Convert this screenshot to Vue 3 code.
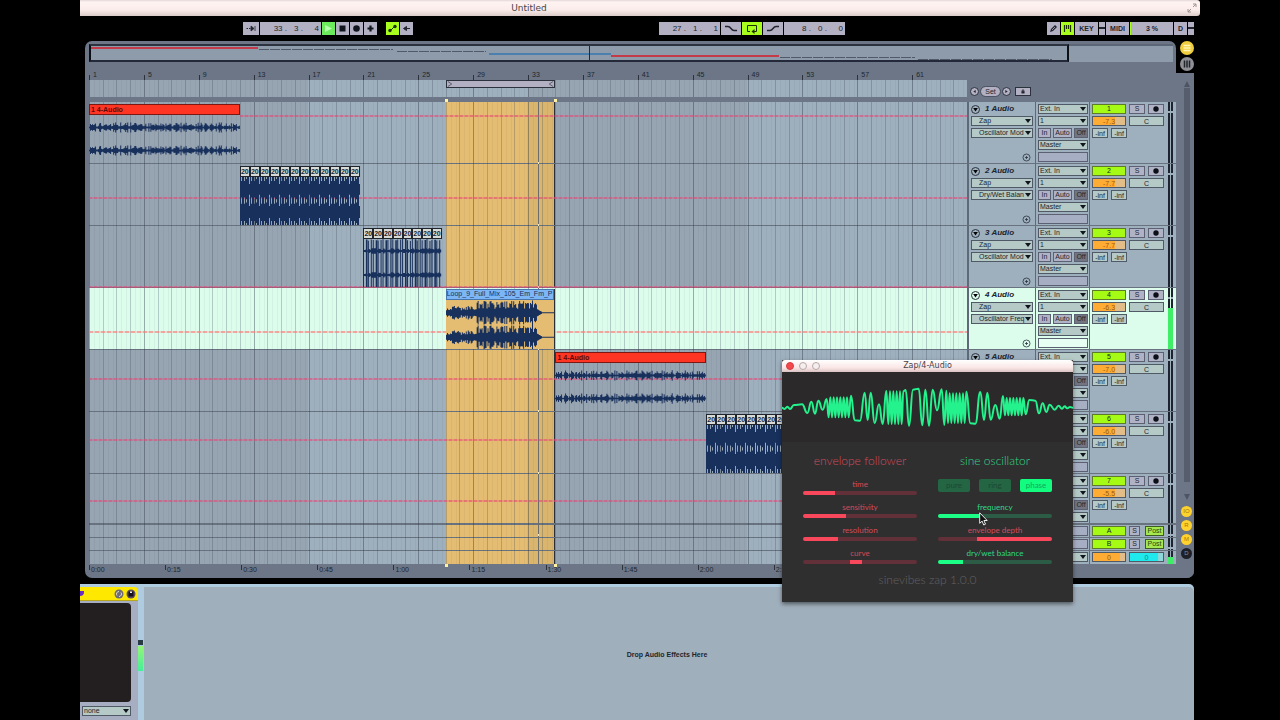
<script setup>
const BARS = 64
const at = bar => ((bar - 1) / BARS) * 100 + '%'
const span = (from, to) => ({ left: at(from), width: ((to - from) / BARS) * 100 + '%' })

function noise(seed) {
  let s = seed
  return () => {
    s = (s * 16807) % 2147483647
    return s / 2147483647
  }
}

const bar = (x, top, bottom, w = 1) =>
  `M${x} ${top.toFixed(1)}h${w}V${bottom.toFixed(1)}h-${w}z`

function sparseWave(seed) {
  const r = noise(seed)
  let d = ''
  for (let x = 0; x < 150; x++) {
    const hit = x % 5 === 1 || x % 7 === 3
    const a = hit ? 3 + r() * 2.5 : 0.7 + r() * 2.4
    d += bar(x, 13 - a, 13 + a) + bar(x, 37 - a, 37 + a)
  }
  return d
}

function denseWave(slices) {
  let d = ''
  for (let x = 0; x < slices * 10; x++) {
    const k = x % 10
    const cut = k === 1 || k === 4 ? 4 : k === 9 ? 7 : k === 6 ? 2 : 0
    d += bar(x, cut, 24 - cut * 0.9) + bar(x, 24 + cut * 0.7, 48 - cut)
  }
  return d
}

function stripeWave(slices) {
  const r = noise(77)
  let d = ''
  for (let x = 0; x < slices * 10; x++) {
    const k = x % 10
    if (k === 0 || k === 3 || k === 5 || k === 8) d += bar(x, r() * 2, 48, k === 3 ? 1.6 : 1)
    else {
      const a = 0.8 + r() * 2
      d += bar(x, 12 - a, 12 + a) + bar(x, 36 - a, 36 + a)
    }
  }
  return d
}

function loopWave() {
  const r = noise(421)
  let d = ''
  for (let x = 0; x < 110; x++) {
    let a
    if (x < 31) a = 2.5 + r() * 4.5
    else if (x < 92) a = r() > 0.2 ? 8 + r() * 4.5 : 4 + r() * 2
    else if (x < 98) a = Math.max(0.5, (98 - x) * 0.6)
    else a = 0.4
    d += bar(x, Math.max(0, 13 - a), 13 + a) + bar(x, 38 - a, Math.min(50, 38 + a))
  }
  return d
}

const tracks = [
  { n: 1, param: 'Oscillator Mod', vol: '-7.3', auto: 13, autoFrom: 12, clip: { type: 'red', from: 1, to: 12, wave: sparseWave(9) } },
  { n: 2, param: 'Dry/Wet Balan', vol: '-7.7', auto: 33, clip: { type: 'cut', from: 12, to: 20.75, slices: 12, wave: denseWave(12) } },
  { n: 3, param: 'Oscillator Mod', vol: '-7.7', auto: 60, clip: { type: 'cut', from: 21, to: 26.7, slices: 8, wave: stripeWave(8) } },
  { n: 4, param: 'Oscillator Freq', vol: '-6.3', auto: 43, selected: true, level: 41, clip: { type: 'loop', from: 27, to: 35, wave: loopWave() } },
  { n: 5, param: 'Oscillator Mod', vol: '-7.0', auto: 28, clip: { type: 'red', from: 35, to: 46, wave: sparseWave(31) } },
  { n: 6, param: 'Dry/Wet Balan', vol: '-6.0', auto: 27, clip: { type: 'cut', from: 46, to: 54.75, slices: 12, wave: denseWave(12) } },
  { n: 7, param: 'Oscillator Mod', vol: '-5.5', auto: 26, short: true }
]

const barLabels = Array.from({ length: 16 }, (_, i) => 1 + i * 4)
const times = ['0:00', '0:15', '0:30', '0:45', '1:00', '1:15', '1:30', '1:45', '2:00', '2:15', '2:30', '2:45']

const overview = [
  { kind: 'red', x: 0, w: 15.4, y: 0 },
  { kind: 'cuts', x: 15.5, w: 12.4, y: 2 },
  { kind: 'cuts', x: 28.2, w: 8.2, y: 4 },
  { kind: 'blue', x: 36.7, w: 11.3, y: 6 },
  { kind: 'red', x: 48, w: 15.5, y: 8 },
  { kind: 'cuts', x: 63.6, w: 12.4, y: 10 },
  { kind: 'cuts', x: 76.3, w: 12.4, y: 12 }
]

const follower = [
  { name: 'time', from: 0, to: 28 },
  { name: 'sensitivity', from: 0, to: 38 },
  { name: 'resolution', from: 0, to: 31 },
  { name: 'curve', from: 41, to: 52 }
]
const oscillator = [
  { name: 'frequency', from: 0, to: 38, green: true },
  { name: 'envelope depth', from: 34, to: 100 },
  { name: 'dry/wet balance', from: 0, to: 22, green: true }
]

function dense(from, to, top, bottom) {
  const out = []
  let up = false
  for (let x = from; x <= to; x += 5) {
    out.push([x, up ? top : bottom])
    up = !up
  }
  return out
}
const extremes = [
  [20, 157], [28, 161], [36, 154], [44, 161], [56, 149], [80, 147], [96, 173], [108, 139], [119, 175], [129, 136],
  [142, 163], [154, 131], ...dense(160, 220, 126, 186), [227, 121], [238, 195], [254, 196], [268, 112], [277, 194],
  [286, 112], [298, 203], [311, 147], [322, 206], [333, 107], ...dense(339, 387, 108, 206), [391, 104], [401, 211],
  [413, 103], [430, 100], [441, 210], [450, 103], [461, 211], [472, 103], [485, 165], [499, 102], [507, 209],
  [513, 106], ...dense(518, 568, 114, 203), [573, 109], [585, 204], [600, 205], [615, 110], [626, 194], [636, 112],
  [646, 193], [660, 149], [673, 190], [683, 122], ...dense(689, 739, 128, 180), [744, 128], [751, 177], [762, 134],
  [780, 136], [791, 174], [802, 144], [813, 170], [823, 148], [838, 163], [850, 151], [860, 160], [868, 153],
  [876, 159], [884, 155], [893, 157]
]
const oscPath = extremes
  .map(([x, y], i) => {
    if (!i) return `M${x} ${y}`
    const [px, py] = extremes[i - 1]
    const m = (px + x) / 2
    return `C${m} ${py} ${m} ${y} ${x} ${y}`
  })
  .join('')
</script>

<template>
  <div class="screen">
    <header class="titlebar">
      <span class="title">Untitled</span>
      <button class="expand" aria-label="Full screen">
        <svg viewBox="0 0 10 10"><path d="M6 1h3v3M9 1 6 4M4 9H1V6M1 9l3-3" /></svg>
      </button>
    </header>

    <nav class="toolbar">
      <div class="group left">
        <button class="tb w16" aria-label="Follow"><svg viewBox="0 0 16 13"><path d="M3.500 6.500H9" stroke="#20242c" stroke-dasharray="1.500 1" /><path d="M8 4v5l3-2.500zM12 4v5" fill="#20242c" stroke="#20242c" stroke-width=".8" /></svg></button>
        <div class="pos"><input aria-label="Bar" value="33 ." /><input aria-label="Beat" value="3 ." /><input aria-label="Sixteenth" value="4" /></div>
        <button class="tb w13 play" aria-label="Play"><svg viewBox="0 0 13 13"><path d="M3 3v7l7-3.500z" fill="#b9ffb0" /></svg></button>
        <button class="tb w13" aria-label="Stop"><svg viewBox="0 0 13 13"><path d="M3.500 3.500h6v6h-6z" fill="#10141c" /></svg></button>
        <button class="tb w13" aria-label="Record"><svg viewBox="0 0 13 13"><circle cx="6.500" cy="6.500" r="3.300" fill="#10141c" /></svg></button>
        <button class="tb w13" aria-label="Overdub"><svg viewBox="0 0 13 13"><path d="M6.500 3.500v6M3.500 6.500h6" stroke="#10141c" stroke-width="2.200" /></svg></button>
        <button class="tb w13 lime gap" aria-label="Automation"><svg viewBox="0 0 13 13"><path d="M4 9 9 4" stroke="#1c3000" /><circle cx="4" cy="8.500" r="1.700" fill="#1c3000" /><circle cx="9" cy="4.500" r="1.700" fill="#1c3000" /></svg></button>
        <button class="tb w13" aria-label="Back to arrangement"><svg viewBox="0 0 13 13"><path d="M6.500 4.500v4l-3-2zM6 6.500h4" fill="#20242c" stroke="#20242c" /></svg></button>
      </div>
      <div class="group middle">
        <div class="pos"><input aria-label="Loop start bar" value="27 ." /><input aria-label="Loop start beat" value="1 ." /><input aria-label="Loop start sixteenth" value="1" /></div>
        <button class="tb w20" aria-label="Punch in"><svg viewBox="0 0 20 13"><path d="M4 4.500h3c3 0 3 4 6 4h3" stroke="#20242c" stroke-width="1.500" fill="none" /></svg></button>
        <button class="tb w20 lime" aria-label="Loop"><svg viewBox="0 0 20 13"><path d="M8 9.500H5.500v-6h9v6H12" stroke="#1c3000" fill="none" /><path d="M12.500 7v5L9.500 9.500z" fill="#1c3000" /></svg></button>
        <button class="tb w20" aria-label="Punch out"><svg viewBox="0 0 20 13"><path d="M4 8.500h3c3 0 3-4 6-4h3" stroke="#20242c" stroke-width="1.500" fill="none" /></svg></button>
        <div class="pos"><input aria-label="Loop bars" value="8 ." /><input aria-label="Loop beats" value="0 ." /><input aria-label="Loop sixteenths" value="0" /></div>
      </div>
      <div class="group right">
        <button class="tb w13" aria-label="Draw"><svg viewBox="0 0 13 13"><path d="m3 10 1-3 4-4 2 2-4 4z" fill="#20242c" /><path d="m5 8 3-3" stroke="#b4b0c3" stroke-width=".8" /></svg></button>
        <button class="tb w13 lime" aria-label="Keyboard"><svg viewBox="0 0 13 13"><path d="M3.500 3v7M9.500 3v7M5.500 3v4M7.500 3v4" stroke="#1c3000" stroke-width="1.200" /></svg></button>
        <button class="tb w22">KEY</button>
        <span class="io"></span>
        <button class="tb w22">MIDI</button>
        <span class="cpu">3 %</span>
        <button class="tb w13">D</button>
        <span class="io"></span>
      </div>
    </nav>

    <main class="arrangement">
      <section class="main">
        <div class="overview">
          <div v-for="(o, i) in overview" :key="i" :class="['ov', o.kind]" :style="{ left: o.x + '%', width: o.w + '%', top: o.y + 'px' }"></div>
          <div class="ov-frame"></div>
          <div class="ov-head"></div>
        </div>

        <div class="row">
          <div class="ruler">
            <span v-for="b in barLabels" :key="b" class="tick" :style="{ left: at(b) }">{{ b }}</span>
          </div>
          <div class="side"></div>
        </div>

        <div class="row scrubrow">
          <div class="scrub shade">
            <div class="grid"><i v-for="b in 64" :key="b"></i></div>
            <div class="brace" :style="span(27, 35)">
              <svg viewBox="0 0 6 7"><path d="M.5.5 5 3.500.5 6.500" /></svg>
              <svg viewBox="0 0 6 7"><path d="M5.500.5 1 3.500l4.500 3" /></svg>
            </div>
          </div>
          <div class="side setbar">
            <button class="dot" aria-label="Previous locator"><svg viewBox="0 0 9 9"><path d="M6 2.500v4l-3-2z" /></svg></button>
            <button class="set">Set</button>
            <button class="dot" aria-label="Next locator"><svg viewBox="0 0 9 9"><path d="M3 2.500v4l3-2z" /></svg></button>
            <button class="lock" aria-label="Lock envelopes"><svg viewBox="0 0 9 9"><path d="M2.500 4h4v3h-4z" /><path d="M3.500 4V2.500h2V4" fill="none" stroke="#20242c" /></svg></button>
          </div>
        </div>

        <div class="tracks">
          <div class="backdrop">
            <div class="shade fill"></div>
            <div class="selection" :style="span(27, 35)"></div>
          </div>
          <div class="overlay">
            <div class="grid"><i v-for="b in 64" :key="b"></i></div>
            <div class="playhead" :style="{ left: at(33.7) }"></div>
          </div>

          <div v-for="t in tracks" :key="t.n" :class="['row', 'track', { selected: t.selected, short: t.short }]">
            <div class="lane">
              <div class="automation" :style="{ top: t.auto + 'px', left: at(t.autoFrom || 1) }"></div>
              <div v-if="t.clip" :class="['clip', t.clip.type]" :style="span(t.clip.from, t.clip.to)">
                <div v-if="t.clip.type === 'cut'" class="slices"><b v-for="s in t.clip.slices" :key="s">20</b></div>
                <div v-else class="cliphead">{{ t.clip.type === 'red' ? '1 4-Audio' : 'Loop_9_Full_Mix_105_Em_Fm_P' }}</div>
                <svg class="wave" :viewBox="t.clip.type === 'cut' ? `0 0 ${t.clip.slices * 10} 48` : t.clip.type === 'red' ? '0 0 150 50' : '0 0 110 50'" preserveAspectRatio="none"><path :d="t.clip.wave" /></svg>
              </div>
            </div>
            <div class="side panel">
              <div class="col names">
                <div class="name"><button class="fold" aria-label="Fold track"><svg viewBox="0 0 9 9"><path d="M1.500 2.500h6l-3 4.500z" /></svg></button><strong v-if="!t.short">{{ t.n }} Audio</strong></div>
                <label class="sel wide"><select aria-label="Device"><option>Zap</option></select></label>
                <label class="sel wide"><select aria-label="Parameter"><option>{{ t.param }}</option></select></label>
                <button v-if="!t.short" class="add" aria-label="Add lane"><svg viewBox="0 0 9 9"><circle cx="4.500" cy="4.500" r="3.500" /><path d="M3 4.500h3M4.500 3v3" /></svg></button>
              </div>
              <div class="col routing">
                <label class="sel"><select aria-label="Input"><option>Ext. In</option></select></label>
                <label class="sel"><select aria-label="Channel"><option>1</option></select></label>
                <div class="mon"><button class="b12">In</button><button class="b19">Auto</button><button class="b13 off">Off</button></div>
                <label class="sel"><select aria-label="Output"><option>Master</option></select></label>
                <div v-if="!t.short" class="blank"></div>
              </div>
              <div class="col mixer">
                <div class="pair"><button class="num">{{ t.n }}</button><button class="sq">S</button><button class="sq" aria-label="Arm"><svg viewBox="0 0 9 8"><circle cx="4.500" cy="4" r="2.700" /></svg></button></div>
                <div class="pair"><input class="vol" aria-label="Volume" :value="t.vol" /><input class="pan" aria-label="Pan" value="C" /></div>
                <div class="pair sends"><input aria-label="Send A" value="-inf" /><input aria-label="Send B" value="-inf" /></div>
              </div>
              <div class="meter"><i></i><i></i><em v-if="t.level" :style="{ height: t.level + 'px' }"></em></div>
            </div>
          </div>

          <div v-for="r in ['A', 'B']" :key="r" class="row return">
            <div class="lane"></div>
            <div class="side panel">
              <div class="col names"></div>
              <div class="col routing"><div class="blank"></div></div>
              <div class="col mixer"><div class="pair"><button class="num">{{ r }}</button><button class="sq thin">S</button><button class="post">Post</button></div></div>
              <div class="meter"><i></i><i></i></div>
            </div>
          </div>
          <div class="row return master">
            <div class="lane"></div>
            <div class="side panel">
              <div class="col names"></div>
              <div class="col routing"><label class="sel"><select aria-label="Master output"><option>1/2</option></select></label></div>
              <div class="col mixer"><div class="pair"><input class="vol full" aria-label="Master volume" value="0" /><input class="cue" aria-label="Cue volume" value="0" /></div></div>
              <div class="meter"><i></i><i></i><em :style="{ height: '7px' }"></em></div>
            </div>
          </div>
          <div class="markers">
            <template v-for="b in [27, 35]" :key="b">
              <i class="mark top" :style="{ left: at(b) }"></i>
              <i class="mark bottom" :style="{ left: at(b) }"></i>
            </template>
          </div>
        </div>

        <div class="row">
          <div class="timeline">
            <span v-for="(t, i) in times" :key="t" class="tick" :style="{ left: i * 8.667 + '%' }">{{ t }}</span>
          </div>
          <div class="side"></div>
        </div>
      </section>

      <aside class="rail">
        <div class="tabs">
          <button class="view on" aria-label="Arrangement view"><svg viewBox="0 0 14 14"><path d="M3.500 4.500h7M3.500 7h7M3.500 9.500h7" /></svg></button>
          <button class="view" aria-label="Session view"><svg viewBox="0 0 14 14"><path d="M4.500 3.500v7M7 3.500v7M9.500 3.500v7" /></svg></button>
        </div>
        <div class="scroll">
          <span class="arrow up"></span>
          <span class="thumb"></span>
          <span class="arrow down"></span>
          <button class="io-dot">IO</button>
          <button class="io-dot">R</button>
          <button class="io-dot">M</button>
          <button class="io-dot dark">D</button>
        </div>
      </aside>
    </main>

    <section class="devices">
      <div class="device">
        <div class="dev-title">
          <i></i>
          <button aria-label="Hot swap"><svg viewBox="0 0 10 10"><circle cx="5" cy="5" r="4.500" fill="#6e6a78" /><path d="M3 6.500a2.500 2.500 0 0 1 2-4M7 3.500a2.500 2.500 0 0 1-2 4" fill="none" stroke="#e9e2c0" /></svg></button>
          <button aria-label="Save preset"><svg viewBox="0 0 10 10"><circle cx="5" cy="5" r="4.500" fill="#5c4d5e" /><path d="M2.500 2.500h5v5h-5z" fill="#16101c" /><path d="M4 2.500h2V4H4z" fill="#eee" /></svg></button>
        </div>
        <div class="dev-screen"></div>
        <label class="sel none"><select aria-label="Preset"><option>none</option></select></label>
      </div>
      <div class="strip"><span class="clipled"></span><span class="level"></span></div>
      <div class="drop">Drop Audio Effects Here</div>
    </section>

    <section class="plugin">
      <header class="plug-title">
        <button class="light close" aria-label="Close"></button>
        <button class="light" aria-label="Minimise"></button>
        <button class="light" aria-label="Zoom"></button>
        <span>Zap/4-Audio</span>
      </header>
      <div class="scope"><svg viewBox="20 50 873 210" preserveAspectRatio="none"><path :d="oscPath" /></svg></div>
      <div class="controls">
        <div class="half">
          <h2>envelope follower</h2>
          <label v-for="s in follower" :key="s.name" class="knob">{{ s.name }}<input type="range" :value="s.to" :style="{ '--from': s.from + '%', '--to': s.to + '%' }" /></label>
        </div>
        <div class="half green">
          <h2>sine oscillator</h2>
          <div class="modes"><button>pure</button><button>ring</button><button class="on">phase</button></div>
          <label v-for="s in oscillator" :key="s.name" :class="['knob', { green: s.green }]">{{ s.name }}<input type="range" :value="s.to" :style="{ '--from': s.from + '%', '--to': s.to + '%' }" /></label>
        </div>
      </div>
      <footer>sinevibes zap 1.0.0</footer>
      <svg class="cursor" viewBox="0 0 9 14"><path d="M.7.8v10.500l2.400-2.200 1.600 3.900 1.800-.8-1.600-3.700h3.300z" /></svg>
    </section>
  </div>
</template>

<style>
body { background: #000; }
</style>

<style scoped>
* { box-sizing: border-box; }
.screen {
  position: relative;
  height: 100vh;
  min-height: 720px;
  padding: 0 80px;
  overflow: hidden;
  display: flex;
  flex-direction: column;
  background: #000;
  color: #20262e;
  font: 7px/10px "Liberation Sans", Arial, sans-serif;
}
button, input, select {
  margin: 0;
  padding: 0;
  border: 0;
  border-radius: 0;
  background: none;
  color: inherit;
  font: inherit;
  appearance: none;
  min-width: 0;
}
svg { display: block; }
i, em { display: block; font-style: normal; }

.titlebar {
  position: relative;
  flex: none;
  height: 16px;
  display: flex;
  justify-content: center;
  padding-right: 222px;
  background: linear-gradient(#e2d8d8, #fff3f2 2px, #fbecea 10px, #dccdca);
  border-radius: 0 3px 3px 0;
}
.title { font: 9px/16px "DejaVu Sans", sans-serif; color: #4a4444; }
.expand { position: absolute; right: 3px; top: 3px; width: 10px; height: 10px; }
.expand path { fill: none; stroke: #9d9391; }

.toolbar { flex: none; display: flex; height: 25px; padding: 6px 6px 0 163px; }
.group { display: flex; gap: 1px; height: 13px; }
.middle { margin-left: 246px; }
.right { margin-left: auto; }
.tb { height: 13px; background: #b4b0c3; font-weight: bold; }
.tb svg { width: 100%; height: 13px; fill: none; }
.w13 { width: 13px; }
.w16 { width: 16px; }
.w20 { width: 20px; }
.w22 { width: 23px; }
.gap { margin-left: 8px; }
.lime { background: #a8ff1e; }
.play { background: #6ceb5c; }
.pos { display: flex; justify-content: flex-end; width: 61px; padding-right: 2px; background: #b4b0c3; font-size: 8px; }
.pos input { width: 16px; text-align: right; }
.pos input:first-child { width: 27px; }
.io { width: 6px; background: linear-gradient(#b4b0c3 5px, #20242c 5px 7px, #b4b0c3 7px); }
.cpu { width: 43px; line-height: 13px; text-align: center; font-weight: bold; background: #b4b0c3; border-left: 1px solid #a8ff1e; }

.arrangement { flex: none; display: flex; margin: 0 6px 0 5px; }
.main { flex: 1; min-width: 0; padding: 3px 0 0 4px; background: #6c7686; border-radius: 7px 7px 0 7px; }
.row { display: flex; }
.side { flex: none; width: 209px; }

.overview { position: relative; height: 18px; margin-right: 3px; border-top: 2px solid #5d6677; background: #8d9baa; }
.ov { position: absolute; height: 2px; margin: 1px 0 0 2px; }
.ov.red { background: #c33a48; }
.ov.blue { background: #4b7fae; }
.ov.cuts { background: repeating-linear-gradient(90deg, #4f5967 0 10px, #8d9baa 10px 11px); height: 1px; }
.ov-frame { position: absolute; left: 0; top: -2px; width: 90.4%; height: 18px; border: 2px solid #0c0f16; border-top-color: #2c3240; border-bottom-color: #232938; }
.ov-head { position: absolute; left: 46.1%; top: 0; width: 1px; height: 14px; background: #222936; }

.ruler, .timeline { position: relative; flex: 1; height: 18px; overflow: hidden; }
.tick { position: absolute; bottom: 0; padding-left: 4px; line-height: 10px; }
.tick::before { content: ""; position: absolute; left: 0; bottom: 0; width: 1px; height: 5px; background: #2b323d; }
.timeline { height: 14px; }
.timeline .tick { bottom: auto; top: 1px; padding-left: 2px; }
.timeline .tick::before { top: 0; }

.shade { background: linear-gradient(90deg, #97a4b1 25%, #9eafbd 25% 50%, #97a4b1 50% 75%, #9eafbd 75%); }
.fill { position: absolute; inset: 0; }
.scrubrow { height: 22px; }
.scrub { position: relative; flex: 1; height: 17px; }
.grid { position: absolute; inset: 0; display: grid; grid-template-columns: repeat(64, 1fr); }
.grid i { border-left: 1px solid rgba(48, 60, 76, .26); background: repeating-linear-gradient(90deg, transparent 0 4px, rgba(48, 60, 76, .06) 4px 5px); }
.grid i:nth-child(4n + 1) { border-left-color: rgba(40, 50, 64, .4); }
.brace { position: absolute; top: 0; height: 8px; display: flex; justify-content: space-between; background: #b4b0c3; border: 1px solid #2b323d; }
.brace svg { width: 6px; height: 6px; fill: none; stroke: #4b4f5a; }
.setbar { display: flex; align-items: center; gap: 2px; padding: 1px 0 0 3px; }
.dot { width: 9px; height: 9px; border-radius: 5px; background: #b4b0c3; border: 1px solid #2b323d; }
.dot svg, .lock svg { width: 100%; height: 7px; fill: #20242c; }
.set { width: 19px; height: 9px; line-height: 9px; border-radius: 5px; background: #b4b0c3; outline: 1px solid #4d5463; }
.lock { width: 16px; height: 9px; margin-left: 2px; background: #b4b0c3; border: 1px solid #2b323d; }

.tracks { position: relative; }
.backdrop, .overlay, .markers { position: absolute; inset: 0 209px 0 0; }
.overlay { z-index: 2; pointer-events: none; }
.markers { z-index: 4; pointer-events: none; }
.selection { position: absolute; top: 0; bottom: 0; background: linear-gradient(90deg, #e5bd72 75%, #dab56e 75%); border-right: 1px solid #2b2f38; }
.playhead { position: absolute; top: 0; bottom: 0; width: 1px; background: repeating-linear-gradient(#6b6c6c 0 60px, #f4e7c4 60px 62px); }
.mark { position: absolute; width: 3px; height: 3px; margin-left: -1px; background: #fff2a0; }
.mark.top { top: -3px; }
.mark.bottom { bottom: -3px; }
.track { height: 62px; }
.track.short { height: 51px; }
.lane { position: relative; flex: 1; border-bottom: 1px solid #68737f; }
.short > .lane, .short > .panel { border-bottom-width: 2px; }
.selected > .lane, .selected > .panel { background: #dcfdec; }
.automation { position: absolute; z-index: 3; right: 0; height: 2px; background: repeating-linear-gradient(90deg, rgba(232, 70, 118, .6) 0 3px, rgba(232, 70, 118, .3) 3px 5px); }
.selected .automation { background: repeating-linear-gradient(90deg, rgba(255, 120, 120, .65) 0 4px, rgba(255, 120, 120, .25) 4px 6px); }
.clip { position: absolute; z-index: 3; top: 2px; bottom: 0; overflow: hidden; display: flex; flex-direction: column; }
.cliphead { flex: none; height: 11px; padding-left: 1px; white-space: nowrap; overflow: hidden; border: 1px solid #7c1712; background: #ff3524; color: #5c0b08; font-weight: bold; line-height: 9px; }
.loop { top: 1px; background: #e5bd72; border-right: 1px solid #2b2f38; }
.loop .cliphead { height: 11px; background: #7db6f6; border-color: #4676ab; color: #173055; font-weight: normal; padding: 0; line-height: 8px; }
.wave { flex: 1; min-height: 0; width: 100%; fill: #18305c; }
.slices { flex: none; display: flex; height: 11px; }
.slices b { flex: 1; min-width: 0; overflow: hidden; border: 1px solid #20242c; background: #d8dad6; line-height: 9px; }

.panel { display: flex; background: #9eafbd; border-left: 2px solid #5f6a79; border-bottom: 1px solid #68737f; }
.col { display: flex; flex-direction: column; gap: 2px; padding-top: 2px; }
.names { width: 67px; padding-left: 2px; border-right: 1px solid #5f6a79; }
.routing { width: 54px; padding-left: 2px; border-right: 1px solid #5f6a79; }
.mixer { width: 78px; padding-left: 2px; }
.name { display: flex; align-items: center; gap: 5px; height: 10px; font-size: 8px; font-style: italic; }
.fold { width: 9px; height: 9px; border-radius: 5px; border: 1px solid #2b323d; }
.fold svg { width: 7px; height: 7px; }
.sel { position: relative; width: 50px; height: 10px; border: 1px solid #4f5a66; background: #b5c9c6; }
.sel.wide { width: 62px; }
.sel::after { content: ""; position: absolute; right: 1px; top: 2px; border: 3px solid transparent; border-top: 4px solid #10141c; border-bottom: 0; pointer-events: none; }
.sel select { display: block; width: 100%; height: 8px; padding-left: 1px; line-height: 8px; }
.sel.wide select { padding-left: 7px; }
.add { width: 9px; height: 9px; margin: 13px 4px 0 auto; }
.add svg { fill: none; stroke: #2b323d; stroke-width: .8; }
.mon { display: flex; gap: 2px; height: 10px; }
.mon button, .sq { border: 1px solid #5b6172; background: #b0b3c6; line-height: 8px; }
.b12 { width: 13px; }
.b19 { width: 19px; }
.b13 { width: 14px; }
.mon .off { background: #737680; }
.blank { width: 50px; height: 10px; border: 1px solid #5b6172; background: #a5aec2; }
.selected .blank { background: #e6fff2; }
.pair { display: flex; gap: 3px; height: 10px; }
.pair input { border: 1px solid #4f5a66; height: 10px; text-align: center; line-height: 8px; }
.num { width: 34px; border: 1px solid #5c7a2a; background: #a5fb14; line-height: 8px; }
.sq { width: 16px; }
.sq svg { width: 100%; height: 8px; fill: #0c0f16; }
.pair .vol { width: 34px; color: #9a5a10; background: linear-gradient(90deg, #ffac35 70%, #e3bd88 70%); }
.pair .vol.full { background: linear-gradient(90deg, #ffac35 85%, #e3bd88 85%); }
.pair .pan { width: 35px; background: #b5c9c6; }
.pair .cue { width: 35px; background: linear-gradient(90deg, #1fe9ec 85%, #8fd8da 85%); color: #12878f; }
.pair .sq.thin { width: 11px; }
.post { width: 19px; margin-left: 2px; line-height: 8px; border: 1px solid #3d5c20; background: #a6e850; color: #23450a; }
.pair.sends input { flex: none; width: 16px; background: #b5c9c6; }
.meter { position: relative; display: flex; gap: 1px; margin-left: auto; width: 8px; }
.meter i { width: 2px; background: linear-gradient(#1d2430 9px, #9eafbd 9px 11px, #1d2430 11px); }
.meter em { position: absolute; left: 0; bottom: 0; width: 5px; background: #3fee66; }
.return { height: 13px; }
.return .col { padding-top: 1px; }
.master .lane, .master .panel { border-bottom: 0; }

.rail { flex: none; width: 18px; display: flex; flex-direction: column; background: #6c7686; border-radius: 0 0 7px 0; }
.tabs { height: 32px; padding: 0 0 0 4px; background: #000; display: flex; flex-direction: column; gap: 2px; }
.view { width: 14px; height: 14px; border-radius: 7px; background: #8f8f96; }
.view.on { background: #f0cf3e; }
.view path { fill: none; stroke: #22242c; stroke-width: 1.500; }
.view.on path { stroke: #fff6b8; }
.scroll { flex: 1; display: flex; flex-direction: column; align-items: center; padding: 8px 0 19px 3px; background: #6c7686; border-radius: 0 7px 7px 0; }
.arrow { border: 3px solid transparent; }
.arrow.up { border-bottom: 6px solid #4d5463; border-top: 0; }
.arrow.down { border-top: 6px solid #4d5463; border-bottom: 0; margin: 12px 0 6px; }
.thumb { flex: 1; width: 6px; margin-top: 1px; background: #565d6d; }
.io-dot { flex: none; width: 11px; height: 11px; margin-bottom: 3px; border-radius: 6px; background: #ffd22e; color: #a87a08; font-size: 6px; line-height: 11px; }
.io-dot.dark { margin-bottom: 0; background: #1d2029; color: #8a8f9c; }

.devices { flex: 1; display: flex; margin: 6px 6px 0 0; border-top: 3px solid #aecbe0; background: #aecbe0; border-radius: 0 5px 0 0; }
.device { width: 58px; background: #a7aec2; display: flex; flex-direction: column; border-radius: 0 4px 0 0; overflow: hidden; }
.dev-title { flex: none; display: flex; align-items: center; gap: 2px; height: 14px; padding-right: 2px; background: #ffe800; border-bottom: 1px solid #b8a71c; }
.dev-title i { width: 4px; height: 5px; margin-right: auto; background: #6a2ac8; border-radius: 0 0 4px 0; }
.dev-title svg { width: 10px; height: 10px; }
.dev-screen { height: 99px; margin: 2px 7px 4px 0; background: #231f20; border-radius: 0 4px 4px 0; }
.sel.none { margin-left: 2px; width: 49px; }
.strip { width: 6px; padding-top: 53px; }
.clipled { display: block; width: 5px; height: 5px; margin-bottom: 1px; background: #283a44; }
.level { display: block; width: 5px; height: 25px; background: linear-gradient(#96f578, #45ee9a); }
.drop { flex: 1; padding: 63px 4px 0 0; text-align: center; font-weight: bold; background: #a0afbc; border-radius: 0 5px 0 0; }

.plugin {
  position: absolute;
  left: 782px;
  top: 360px;
  z-index: 10;
  width: 291px;
  background: #302f30;
  box-shadow: 0 2px 4px rgba(0, 0, 0, .5);
  font-family: Lato, sans-serif;
}
.plug-title { position: relative; display: flex; align-items: center; gap: 5px; height: 12px; padding-left: 4px; background: linear-gradient(#fff, #f9e5e4 8px, #d9c3c2); border-radius: 3px 3px 0 0; }
.plug-title span { position: absolute; left: 0; right: 0; text-align: center; font: 8px/12px "DejaVu Sans", sans-serif; color: #4a4444; pointer-events: none; }
.light { width: 8px; height: 8px; border-radius: 4px; border: 1px solid #b5a8a8; background: #f6eeee; }
.light.close { background: #f3494d; border-color: #d63b42; }
.scope { height: 70px; background: #2b292a; }
.scope svg { width: 100%; height: 70px; }
.scope path { fill: none; stroke: #24f28c; stroke-width: 6; }
.controls { display: flex; gap: 21px; padding: 10px 21px 0; color: #d34b59; }
.half { flex: 1; }
.half h2 { margin: 0 0 9px; height: 18px; font: 300 12px/18px Lato, sans-serif; text-align: center; white-space: nowrap; }
.half.green h2, .knob.green { color: #2fd887; }
.knob { display: block; height: 23px; text-align: center; font-size: 8px; line-height: 10px; color: #d34b59; }
.knob input {
  display: block;
  width: 100%;
  height: 4px;
  margin-top: 2px;
  border-radius: 2px;
  background: linear-gradient(90deg, transparent var(--from), #f9485c var(--from) var(--to), transparent var(--to)), #613038;
}
.knob.green input { background: linear-gradient(90deg, transparent var(--from), #1cff86 var(--from) var(--to), transparent var(--to)), #2c5c45; }
.knob input::-webkit-slider-thumb { appearance: none; width: 1px; height: 4px; background: transparent; }
.modes { display: flex; justify-content: space-between; height: 13px; margin: 0 0 10px; }
.modes button { width: 32px; height: 13px; border-radius: 2px; background: #246543; color: #1c4a33; font-size: 8px; line-height: 13px; }
.modes .on { background: #12fd80; color: #16a65b; }
.plugin footer { height: 31px; font: 300 12px/18px Lato, sans-serif; text-align: center; color: #626162; }
.cursor { position: absolute; left: 197px; top: 152px; width: 9px; height: 14px; fill: #111; stroke: #fff; stroke-width: .9; }
</style>
